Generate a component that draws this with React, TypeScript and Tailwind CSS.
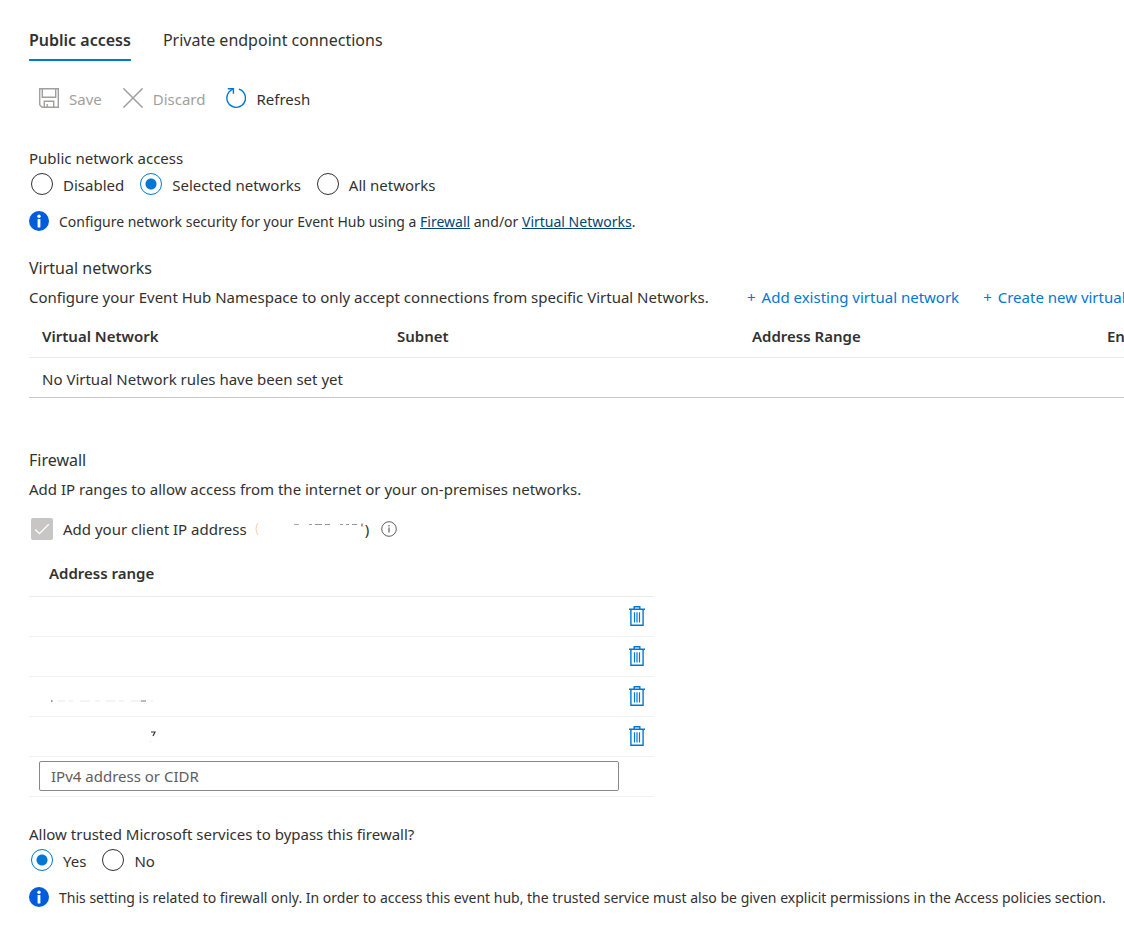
import { ReactNode, useState } from "react";

function InfoBadge() {
  return (
    <svg className="size-5 shrink-0" viewBox="0 0 20 20" aria-hidden="true">
      <circle cx="10" cy="10" r="10" fill="#015cda" />
      <circle cx="10" cy="5.2" r="1.7" fill="#fff" />
      <rect x="8.6" y="8" width="2.8" height="8.6" rx="0.6" fill="#fff" />
    </svg>
  );
}

function SaveIcon() {
  return (
    <svg className="size-5" viewBox="0 0 20 20" fill="none" stroke="#a19f9d" strokeWidth="1.4" aria-hidden="true">
      <path d="M.7.7h18.6v18.6H3.2L.7 16.8z" />
      <path d="M3.3.7v8.6h13.4V.7" />
      <path d="M5.3 19.3v-6h9.4v6M8.2 19v-3" />
    </svg>
  );
}

function DiscardIcon() {
  return (
    <svg className="size-5" viewBox="0 0 20 20" fill="none" stroke="#a19f9d" strokeWidth="1.5" aria-hidden="true">
      <path d="M.4.4l19.2 19.2M19.6.4L.4 19.6" />
    </svg>
  );
}

function RefreshIcon() {
  return (
    <svg className="size-5" viewBox="0 0 20 20" fill="none" stroke="#0078d4" strokeWidth="1.4" aria-hidden="true">
      <path d="M12.8 1.1a9.3 9.3 0 1 1-8.4 1.6L7.2 1" />
      <path d="M1.8.8h5.6v5" />
    </svg>
  );
}

function TrashIcon() {
  return (
    <svg className="h-5 w-4" viewBox="0 0 16 20" fill="none" stroke="#0078d4" strokeWidth="1.4" aria-hidden="true">
      <path d="M0 3.2h16M5.2 3V.8h5.6V3" />
      <path d="M1.9 3.5v15.7h12.2V3.5" />
      <path d="M5.5 6.2v10.2M8 6.2v10.2M10.5 6.2v10.2" strokeWidth="1.2" />
    </svg>
  );
}

function ToolbarButton({ icon, label, disabled }: { icon: ReactNode; label: string; disabled?: boolean }) {
  return (
    <button disabled={disabled} className="flex items-center gap-2.5 disabled:text-[#a19f9d]">
      {icon}
      <span className="pt-0.5">{label}</span>
    </button>
  );
}

function Radio({ name, label, checked, onChange }: { name: string; label: string; checked: boolean; onChange: () => void }) {
  return (
    <label className="flex h-[22px] items-center gap-2.5">
      <input
        type="radio"
        name={name}
        checked={checked}
        onChange={onChange}
        className="size-[22px] appearance-none rounded-full border border-[#323130] bg-white checked:border-[#0078d4] checked:bg-[radial-gradient(circle,#0078d4_5px,transparent_6px)]"
      />
      <span className="pt-0.5">{label}</span>
    </label>
  );
}

function InfoLine({ children }: { children: ReactNode }) {
  return (
    <div className="flex h-5 items-center gap-2.5 text-sm leading-5">
      <InfoBadge />
      <p className="pt-0.5">{children}</p>
    </div>
  );
}

function AddLink({ href, label }: { href: string; label: string }) {
  return (
    <a href={href} className="flex gap-1.5 text-[#0078d4]">
      <span>+</span>
      <span>{label}</span>
    </a>
  );
}

function AddressRemnant({ row }: { row: number }) {
  if (row === 2) {
    return (
      <svg className="mt-2.5 h-1 w-[104px]" viewBox="0 0 104 4" aria-hidden="true">
        <path d="M2 2h1.5" stroke="#333" />
        <path d="M9 2h7M20 2h4M31 2h10M46 2h5M57 2h9M70 2h5M82 2h10" stroke="#e9e9e9" />
        <path d="M92 2h5" stroke="#777" />
        <path d="M102 2h2" stroke="#e9e9e9" />
      </svg>
    );
  }
  if (row === 3) {
    return (
      <svg className="h-3 w-[108px]" viewBox="0 0 108 12" aria-hidden="true">
        <path d="M102 2h4l-2 4" fill="none" stroke="#333" strokeWidth="1.2" />
        <path d="M101 12h1" stroke="#bbb" />
      </svg>
    );
  }
  return null;
}

export default function App() {
  const [access, setAccess] = useState("Selected networks");
  const [bypass, setBypass] = useState("Yes");

  return (
    <main className="min-h-screen overflow-x-hidden bg-white pt-7 pb-7 pl-[29px] font-['Noto_Sans','Open_Sans',sans-serif] text-[15px] leading-5 whitespace-nowrap text-[#323130]">
      <nav className="flex gap-8 text-base leading-6">
        <button className="border-b-2 border-[#0078d4] pb-[7px] font-semibold">Public access</button>
        <button className="border-b-2 border-transparent pb-[7px]">Private endpoint connections</button>
      </nav>

      <div className="mt-[25px] flex h-6 items-center gap-[21px] pl-2.5">
        <ToolbarButton icon={<SaveIcon />} label="Save" disabled />
        <ToolbarButton icon={<DiscardIcon />} label="Discard" disabled />
        <ToolbarButton icon={<RefreshIcon />} label="Refresh" />
      </div>

      <fieldset className="mt-[38px]">
        <legend>Public network access</legend>
        <div className="mt-[5px] flex gap-4 pl-0.5">
          {["Disabled", "Selected networks", "All networks"].map((o) => (
            <Radio key={o} name="access" label={o} checked={access === o} onChange={() => setAccess(o)} />
          ))}
        </div>
      </fieldset>
      <div className="mt-4">
        <InfoLine>
          Configure network security for your Event Hub using a{" "}
          <a href="#firewall" className="text-[#004578] underline">Firewall</a> and/or{" "}
          <a href="#virtual-networks" className="text-[#004578] underline">Virtual Networks</a>.
        </InfoLine>
      </div>

      <section id="virtual-networks" className="mt-[25px]">
        <h2 className="text-base leading-6">Virtual networks</h2>
        <div className="mt-[7px] flex gap-6">
          <p className="min-w-[694px]">Configure your Event Hub Namespace to only accept connections from specific Virtual Networks.</p>
          <AddLink href="#add" label="Add existing virtual network" />
          <AddLink href="#create" label="Create new virtual network" />
        </div>
        <table className="mt-[9px] w-[1420px] table-fixed border-collapse text-left">
          <thead>
            <tr className="h-[41px] border-b border-[#edebe9]">
              {["Virtual Network", "Subnet", "Address Range", "Endpoint Status"].map((h) => (
                <th key={h} className="px-[13px] font-semibold">{h}</th>
              ))}
            </tr>
          </thead>
          <tbody>
            <tr className="h-10 border-b border-[#c8c8c8]">
              <td colSpan={4} className="px-[13px] pt-1">No Virtual Network rules have been set yet</td>
            </tr>
          </tbody>
        </table>
      </section>

      <section id="firewall" className="mt-[50px]">
        <h2 className="text-base leading-6">Firewall</h2>
        <p className="mt-[7px]">Add IP ranges to allow access from the internet or your on-premises networks.</p>
        <div className="mt-[19px] flex h-[22px] items-center gap-3 pl-0.5">
          <label className="flex items-center gap-2.5">
            <span className="grid size-[22px] place-items-center">
              <input type="checkbox" defaultChecked disabled className="col-start-1 row-start-1 size-[22px] appearance-none rounded-xs bg-[#c8c6c4]" />
              <svg className="col-start-1 row-start-1 size-4" viewBox="0 0 16 16" fill="none" stroke="#fff" strokeWidth="1.3" aria-hidden="true">
                <path d="M1.2 8.5l4.2 4.2 9.4-9.4" />
              </svg>
            </span>
            <span className="flex items-center">
              Add your client IP address
              <svg className="h-5 w-[118px]" viewBox="0 0 118 20" fill="none" aria-hidden="true">
                <path d="M11 4q-4 6 0 12" stroke="#f3d0a5" />
                <path d="M47 5.5h5" stroke="#aaa" />
                <path d="M62 5.5h3M68 5.5h7M78 5.5h5M93 5.5h3M99 5.5h3M105 5.5h5" stroke="#999" />
                <path d="M115 4.5v3" stroke="#444" />
              </svg>
              )
            </span>
          </label>
          <button aria-label="Client IP address information">
            <svg className="size-4" viewBox="0 0 16 16" fill="none" stroke="#605e5c" aria-hidden="true">
              <circle cx="8" cy="8" r="7.3" />
              <path d="M8 6.5v5M8 4v1.4" strokeWidth="1.2" />
            </svg>
          </button>
        </div>

        <table className="mt-[11px] w-full max-w-[625px] border-collapse text-left">
          <thead>
            <tr className="h-[46px] border-b border-[#edebe9]">
              <th className="pl-5 font-semibold">Address range</th>
              <th aria-label="Actions" />
            </tr>
          </thead>
          <tbody>
            {[0, 1, 2, 3].map((row) => (
              <tr key={row} className="h-10 border-b border-[#f3f2f1]">
                <td className="pb-0.5 pl-5"><AddressRemnant row={row} /></td>
                <td className="w-[35px] pb-0.5 pl-2.5 align-middle">
                  <button aria-label="Delete address range" className="block"><TrashIcon /></button>
                </td>
              </tr>
            ))}
            <tr className="h-10 border-b border-[#f3f2f1]">
              <td className="pb-0.5 pl-2.5">
                <input
                  type="text"
                  aria-label="Address range"
                  placeholder="IPv4 address or CIDR"
                  className="block h-[30px] w-full rounded-xs border border-[#8a8886] px-[11px] placeholder:text-[#605e5c]"
                />
              </td>
              <td />
            </tr>
          </tbody>
        </table>
      </section>

      <fieldset className="mt-[27px]">
        <legend>Allow trusted Microsoft services to bypass this firewall?</legend>
        <div className="mt-[5px] flex gap-4 pl-0.5">
          {["Yes", "No"].map((o) => (
            <Radio key={o} name="bypass" label={o} checked={bypass === o} onChange={() => setBypass(o)} />
          ))}
        </div>
      </fieldset>
      <div className="mt-4">
        <InfoLine>
          This setting is related to firewall only. In order to access this event hub, the trusted service must also be given explicit permissions in the Access policies section.
        </InfoLine>
      </div>
    </main>
  );
}
